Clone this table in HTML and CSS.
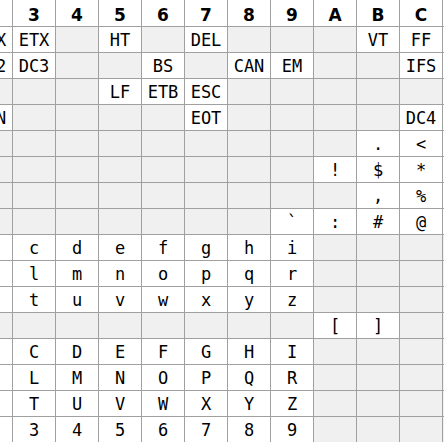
FILE: index.html
```html
<!DOCTYPE html>
<html lang="en">
<head>
<meta charset="utf-8">
<title>EBCDIC code table</title>
<link rel="stylesheet" href="styles.css">
</head>
<body>
<div class="view">
  <div class="grid">
    <div class="c h"></div><div class="c h">3</div><div class="c h">4</div><div class="c h">5</div><div class="c h">6</div><div class="c h">7</div><div class="c h">8</div><div class="c h">9</div><div class="c h">A</div><div class="c h">B</div><div class="c h">C</div><div class="c h"></div>

    <div class="c">STX</div><div class="c">ETX</div><div class="c u"></div><div class="c">HT</div><div class="c u"></div><div class="c">DEL</div><div class="c u"></div><div class="c u"></div><div class="c u"></div><div class="c">VT</div><div class="c">FF</div><div class="c"></div>

    <div class="c">DC2</div><div class="c">DC3</div><div class="c u"></div><div class="c u"></div><div class="c">BS</div><div class="c u"></div><div class="c">CAN</div><div class="c">EM</div><div class="c u"></div><div class="c u"></div><div class="c">IFS</div><div class="c"></div>

    <div class="c u"></div><div class="c u"></div><div class="c u"></div><div class="c">LF</div><div class="c">ETB</div><div class="c">ESC</div><div class="c u"></div><div class="c u"></div><div class="c u"></div><div class="c u"></div><div class="c u"></div><div class="c"></div>

    <div class="c">SYN</div><div class="c u"></div><div class="c u"></div><div class="c u"></div><div class="c u"></div><div class="c">EOT</div><div class="c u"></div><div class="c u"></div><div class="c u"></div><div class="c u"></div><div class="c">DC4</div><div class="c"></div>

    <div class="c u"></div><div class="c u"></div><div class="c u"></div><div class="c u"></div><div class="c u"></div><div class="c u"></div><div class="c u"></div><div class="c u"></div><div class="c u"></div><div class="c">.</div><div class="c">&lt;</div><div class="c"></div>

    <div class="c u"></div><div class="c u"></div><div class="c u"></div><div class="c u"></div><div class="c u"></div><div class="c u"></div><div class="c u"></div><div class="c u"></div><div class="c">!</div><div class="c">$</div><div class="c">*</div><div class="c"></div>

    <div class="c u"></div><div class="c u"></div><div class="c u"></div><div class="c u"></div><div class="c u"></div><div class="c u"></div><div class="c u"></div><div class="c u"></div><div class="c u"></div><div class="c">,</div><div class="c">%</div><div class="c"></div>

    <div class="c u"></div><div class="c u"></div><div class="c u"></div><div class="c u"></div><div class="c u"></div><div class="c u"></div><div class="c u"></div><div class="c">`</div><div class="c">:</div><div class="c">#</div><div class="c">@</div><div class="c"></div>

    <div class="c"></div><div class="c">c</div><div class="c">d</div><div class="c">e</div><div class="c">f</div><div class="c">g</div><div class="c">h</div><div class="c">i</div><div class="c u"></div><div class="c u"></div><div class="c u"></div><div class="c u"></div>

    <div class="c"></div><div class="c">l</div><div class="c">m</div><div class="c">n</div><div class="c">o</div><div class="c">p</div><div class="c">q</div><div class="c">r</div><div class="c u"></div><div class="c u"></div><div class="c u"></div><div class="c u"></div>

    <div class="c"></div><div class="c">t</div><div class="c">u</div><div class="c">v</div><div class="c">w</div><div class="c">x</div><div class="c">y</div><div class="c">z</div><div class="c u"></div><div class="c u"></div><div class="c u"></div><div class="c u"></div>

    <div class="c u"></div><div class="c u"></div><div class="c u"></div><div class="c u"></div><div class="c u"></div><div class="c u"></div><div class="c u"></div><div class="c u"></div><div class="c">[</div><div class="c">]</div><div class="c u"></div><div class="c u"></div>

    <div class="c"></div><div class="c">C</div><div class="c">D</div><div class="c">E</div><div class="c">F</div><div class="c">G</div><div class="c">H</div><div class="c">I</div><div class="c u"></div><div class="c u"></div><div class="c u"></div><div class="c u"></div>

    <div class="c"></div><div class="c">L</div><div class="c">M</div><div class="c">N</div><div class="c">O</div><div class="c">P</div><div class="c">Q</div><div class="c">R</div><div class="c u"></div><div class="c u"></div><div class="c u"></div><div class="c u"></div>

    <div class="c"></div><div class="c">T</div><div class="c">U</div><div class="c">V</div><div class="c">W</div><div class="c">X</div><div class="c">Y</div><div class="c">Z</div><div class="c u"></div><div class="c u"></div><div class="c u"></div><div class="c u"></div>

    <div class="c"></div><div class="c">3</div><div class="c">4</div><div class="c">5</div><div class="c">6</div><div class="c">7</div><div class="c">8</div><div class="c">9</div><div class="c u"></div><div class="c u"></div><div class="c u"></div><div class="c u"></div>
  </div>
</div>
</body>
</html>
```

FILE: styles.css
```css
html, body {
  margin: 0;
  padding: 0;
  overflow: hidden;
  background: #ffffff;
}

.view {
  width: 444px;
  height: 444px;
  overflow: hidden;
}

.grid {
  display: grid;
  grid-template-columns: repeat(12, 42px);
  grid-template-rows: 26px repeat(16, 25px);
  gap: 1px;
  background: #a0a0a0;
  width: max-content;
  margin-left: -30px;
}

.c {
  background: #ffffff;
  color: #000000;
  display: flex;
  align-items: center;
  justify-content: center;
  font-family: "DejaVu Sans Mono", "Liberation Mono", monospace;
  font-size: 17px;
  line-height: 1;
  white-space: nowrap;
  padding-top: 2px;
  box-sizing: border-box;
}

.c.u {
  background: #f0f0f0;
}

.c.h {
  font-family: "DejaVu Sans", Verdana, sans-serif;
  font-weight: bold;
  padding-top: 4px;
}
```
